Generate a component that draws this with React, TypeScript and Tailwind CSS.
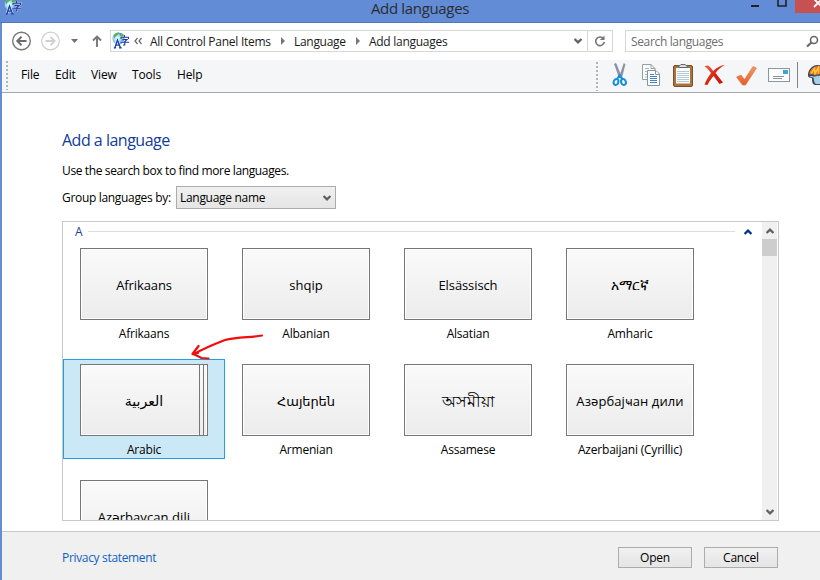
import { memo } from 'react'

interface Language {
  native: string
  name: string
  nativeClass: string
  selected?: boolean
}

const LANGUAGES: Language[] = [
  { native: 'Afrikaans', name: 'Afrikaans', nativeClass: 'text-[13px] tracking-[-0.1px]' },
  { native: 'shqip', name: 'Albanian', nativeClass: 'text-[13px] tracking-normal' },
  { native: 'Elsässisch', name: 'Alsatian', nativeClass: 'text-[13px] tracking-[-0.1px]' },
  { native: 'አማርኛ', name: 'Amharic', nativeClass: 'text-[14px]' },
  { native: 'العربية', name: 'Arabic', nativeClass: 'text-[14px]', selected: true },
  { native: 'Հայերեն', name: 'Armenian', nativeClass: 'text-[13px] tracking-[-0.1px]' },
  { native: 'অসমীয়া', name: 'Assamese', nativeClass: 'text-[15.5px]' },
  { native: 'Азәрбајҹан дили', name: 'Azerbaijani (Cyrillic)', nativeClass: 'text-[13px] tracking-[0.08px]' },
  { native: 'Azərbaycan dili', name: '', nativeClass: 'text-[13px] tracking-[0.08px]' },
]

const MENU = [
  { label: 'File', className: 'w-[34px]' },
  { label: 'Edit', className: 'w-9' },
  { label: 'View', className: 'w-[41px]' },
  { label: 'Tools', className: 'w-[45px]' },
  { label: 'Help', className: 'w-10' },
]

function LanguageIcon() {
  return (
    <svg width="18" height="17" viewBox="0 0 18 17" className="shrink-0">
      <defs>
        <radialGradient id="globe" cx="0.4" cy="0.5" r="0.65">
          <stop offset="0" stopColor="#f2fdff" />
          <stop offset="0.45" stopColor="#9fdcf4" />
          <stop offset="0.75" stopColor="#4a94dd" />
          <stop offset="1" stopColor="#1c49b8" />
        </radialGradient>
      </defs>
      <circle cx="6.5" cy="6.5" r="6" fill="url(#globe)" />
      <path d="M1.500 4C3 1 5 .6 7 1L5.500 3 3.500 4.500 2.500 6.500ZM8 2l2.500-.5 1.500 3-2 1.500-2-1.500Z" fill="#5fb04e" />
      <path d="M12.500 3v2M9 7V5.200h7.500V7M10.500 7.500h4.500L12.800 9.500V13h-1.800M8.500 10.200h8.700" stroke="#fff" strokeWidth="2.200" fill="none" opacity=".5" />
      <path d="M12.500 3v2M9 7V5.200h7.500V7M10.500 7.500h4.500L12.800 9.500V13h-1.800M8.500 10.200h8.700" stroke="#203d9c" strokeWidth="1.100" fill="none" />
      <path d="M2.800 16 5.500 8l3 8M4 13h3.500" stroke="#fff" strokeWidth="2.600" fill="none" opacity=".7" />
      <path d="M2.800 16 5.500 8l3 8M4 13.200h3.500M1.800 15.800h2.300M7 15.800h2.700" stroke="#173dae" strokeWidth="1.300" fill="none" />
    </svg>
  )
}

function Chevron({ up = false, color = '#606060' }: { up?: boolean; color?: string }) {
  return (
    <svg width="8" height="6" viewBox="0 0 8 6" className="shrink-0">
      <path d={up ? 'M.6 5 4 1.600 7.400 5' : 'M.6 1 4 4.400 7.400 1'} stroke={color} strokeWidth="2.200" fill="none" />
    </svg>
  )
}

function Separator() {
  return (
    <svg width="4" height="8" viewBox="0 0 4 8" className="shrink-0">
      <path d="M0 0v8l4-4Z" fill="#777" />
    </svg>
  )
}

function Gripper() {
  return (
    <svg width="2" height="30" viewBox="0 0 2 30" className="shrink-0">
      <path d="M1 1v29" stroke="#b4b4b6" strokeWidth="2" strokeDasharray="2 2" />
    </svg>
  )
}

const TitleBar = memo(function TitleBar() {
  return (
    <div className="relative flex h-[23px] items-start justify-center border-b border-[#4f78b8] bg-[#628cd5] pl-5">
      <div className="absolute top-[-2px] left-1">
        <LanguageIcon />
      </div>
      <h1 className="text-[15px] leading-[16px] tracking-[-0.33px] text-[#2a2c33]">Add languages</h1>
      <div className="absolute top-0 right-0 flex">
        <svg width="69" height="13" viewBox="0 0 69 13">
          <path d="M0 5h8v2H0Z" fill="#1f222a" />
          <path d="M27 0v6h8V0" stroke="#1f222a" strokeWidth="1.6" fill="none" />
          <path d="M44 0h25v13H44Z" fill="#c75050" />
          <path d="m63 -1 8 8M71 -1l-8 8" stroke="#fff" strokeWidth="1.8" />
        </svg>
      </div>
    </div>
  )
})

const AddressRow = memo(function AddressRow() {
  return (
    <div className="flex h-[37px] items-start bg-white pt-[7px] pl-2.5">
      <svg width="98" height="22" viewBox="0 0 98 22" className="shrink-0" fill="none">
        <circle cx="9.500" cy="11" r="8.800" stroke="#777" strokeWidth="1.400" />
        <path d="M14.500 11H5.500M9.500 6.800 5.300 11l4.200 4.200" stroke="#6d6d6d" strokeWidth="2" />
        <circle cx="38.500" cy="11" r="8.800" stroke="#cfcfcf" strokeWidth="1.200" />
        <path d="M33.500 11h9M38.500 6.800l4.200 4.200-4.200 4.200" stroke="#cfcfcf" strokeWidth="1.800" />
        <path d="M59 9h7l-3.500 4Z" fill="#707070" />
        <path d="M85 17V7M81 10.500l4-4 4 4" stroke="#777" strokeWidth="1.900" />
      </svg>
      <div className="flex h-[22px] w-[503px] items-center border border-[#d6d6d6] text-[#1a1a1a]">
        <div className="flex w-[23px] shrink-0 pb-0.5 pl-px">
          <LanguageIcon />
        </div>
        <span className="w-4 shrink-0">
          <svg width="8" height="8" viewBox="0 0 8 8">
            <path d="M3.500 1 1 4l2.500 3M7.500 1 5 4l2.500 3" stroke="#666" strokeWidth="1.200" fill="none" />
          </svg>
        </span>
        <span className="w-[131px] shrink-0 pt-0.5 tracking-[-0.26px]">All Control Panel Items</span>
        <Separator />
        <span className="w-[71px] shrink-0 pt-0.5 pl-[9px] tracking-[-0.3px]">Language</span>
        <Separator />
        <span className="flex-1 pt-0.5 pl-[9px] tracking-[-0.28px]">Add languages</span>
        <Chevron />
        <div className="ml-[5px] flex h-5 w-[25px] items-center justify-center border-l border-[#d6d6d6]">
          <svg width="12" height="12" viewBox="0 0 12 12" fill="none">
            <path d="M9.800 4.200A4.300 4.300 0 1 0 10.300 7" stroke="#777" strokeWidth="1.600" />
            <path d="M5.800 5h4.700V.5Z" fill="#777" />
          </svg>
        </div>
      </div>
      <div className="ml-3 flex h-[22px] w-[195px] shrink-0 items-center justify-between border-y border-l border-[#d6d6d6] pl-[5px] text-[#6d6d6d]">
        <span className="pt-0.5 tracking-[-0.35px]">Search languages</span>
        <svg width="13" height="13" viewBox="0 0 13 13" fill="none" className="mr-px">
          <circle cx="8" cy="5" r="3.500" stroke="#666" strokeWidth="1.600" />
          <path d="m5.500 7.500-4.500 4" stroke="#666" strokeWidth="2.200" />
        </svg>
      </div>
    </div>
  )
})

function ToolbarIcons() {
  return (
    <svg width="212" height="30" viewBox="608 61 212 30" className="shrink-0" fill="none">
      <defs>
        <linearGradient id="red" x1="0" y1="0" x2="1" y2="1">
          <stop offset="0" stopColor="#ef674e" />
          <stop offset="0.5" stopColor="#d62410" />
          <stop offset="1" stopColor="#b91608" />
        </linearGradient>
        <linearGradient id="orange" x1="0" y1="0" x2="0" y2="1">
          <stop offset="0" stopColor="#f79862" />
          <stop offset="1" stopColor="#e45d28" />
        </linearGradient>
      </defs>
      {/* cut */}
      <path d="m614.500 64 1.500-.5 5.500 14-2 .5ZM624 63.500l1 1-3.500 13.500-2-1Z" fill="#8b96a9" stroke="#64718a" strokeWidth=".5" />
      <ellipse cx="616" cy="82" rx="2.300" ry="3" transform="rotate(20 616 82)" stroke="#168fdd" strokeWidth="2" />
      <ellipse cx="623.500" cy="82" rx="2.300" ry="3" transform="rotate(-20 623.500 82)" stroke="#168fdd" strokeWidth="2" />
      <path d="m617 79 2.500-3.500 3 3.500" stroke="#168fdd" strokeWidth="2" />
      {/* copy */}
      <path d="M642.500 64.500h8.500l4 4v11h-12.500Z" fill="#fff" stroke="#979da5" />
      <path d="M651 64.500v4h4" stroke="#979da5" />
      <path d="M645 68.500h4M645 71.500h6M645 74.500h4M645 77h3" stroke="#9bbad2" />
      <path d="M647.500 70.500h8.500l3.500 3.500v11.500h-12Z" fill="#fff" stroke="#8c929a" />
      <path d="M655.500 70.500v4h4" stroke="#8c929a" />
      <path d="M650 74.500h4M650 76.500h7M650 78.500h7M650 80.500h7M650 82.500h7" stroke="#3f83c5" />
      {/* paste */}
      <rect x="673.500" y="65.500" width="19" height="21" rx="1.500" fill="#a9743b" stroke="#79502a" />
      <path d="M676 68h14v15.500h-14Z" fill="#fbfdff" />
      <path d="M677 71.500h12M677 73.500h12M677 75.500h12M677 77.500h12M677 79.500h12M677 81.500h12" stroke="#b5c8d6" />
      <path d="M678.500 67.500c0-2 2-2 2.500-3h4c.5 1 2.500 1 2.500 3Z" fill="#d8e0e5" stroke="#5d6872" />
      {/* delete */}
      <path d="M704.500 66.500c3-2 5-1 8.500 4.500 4-4 8-5.500 12-6-4 2-7 4.500-9.500 8 3 4 5.500 7 7.500 9.500l-3.500 1.500-6-8c-3 3.500-4.500 6-6 9l-3-.5c1.500-4 4-8 6.500-11.500-2.500-3.500-4.500-5.500-6.500-6.500Z" fill="url(#red)" />
      {/* confirm */}
      <path d="m736.500 77 4.500-2 3.500 4.500 8.500-13 3.500 1.500-11 17h-3Z" fill="url(#orange)" stroke="#d97447" strokeWidth=".6" />
      {/* mail */}
      <rect x="768.500" y="68.500" width="21" height="13" fill="#fbfcfd" stroke="#8c969d" />
      <path d="M783 70h5v4h-5Z" fill="#37a8d2" />
      <path d="M773 76.500h11M773 78.500h9" stroke="#8b9398" />
      <path d="M797.500 62v26" stroke="#7f8286" />
      {/* shell extension */}
      <path d="M808 75.500c0-6 4-10 9-10.500h3v20h-5c-3-1-3-4-3-7-3 0-4-1-4-2.500Z" fill="#3b4650" />
      <path d="M809.500 74.500c0-4.500 3.500-8 8-8.500h2.500v8.500c-2-1-3 .5-4.500.5s-3-1-6-.5Z" fill="#ee7728" />
      <path d="m811 73.500 3.500-5 .5 5 3.500-6v6" stroke="#ffc83e" strokeWidth="1.500" />
      <path d="M809 76.500c3-1.500 4 .5 6 0s3-1 5-.5v8h-4c-2-1-2-4-2.500-6.500Z" fill="#a9cfe8" />
    </svg>
  )
}

const MenuBar = memo(function MenuBar() {
  return (
    <div className="flex h-[33px] items-start justify-between border-b border-[#a8a8a8] bg-[#f5f6f8] pt-px pl-1">
      <div className="flex h-7 items-center">
        <Gripper />
        <div className="flex pl-[13px] tracking-[-0.15px]">
          {MENU.map((item) => (
            <span key={item.label} className={item.className}>
              {item.label}
            </span>
          ))}
        </div>
      </div>
      <div className="flex">
        <Gripper />
        <span className="w-2.5" />
        <ToolbarIcons />
      </div>
    </div>
  )
})

function LanguageTile({ language }: { language: Language }) {
  return (
    <div
      className={`flex h-[100px] w-[162px] flex-col items-center border pt-1 ${
        language.selected ? 'border-[#26a0da] bg-[#cbe8f6]' : 'border-transparent'
      }`}
    >
      <div className="relative flex h-[72px] w-32 shrink-0 border border-[#777] bg-white p-px">
        <div className="flex flex-1 items-center justify-center bg-linear-to-b from-[#fafafa] to-[#ececec] pt-0.5">
          <span className={`leading-[18px] whitespace-nowrap ${language.nativeClass}`}>{language.native}</span>
        </div>
        {/* edges of the cards stacked behind a language that has variants */}
        {language.selected && (
          <div className="absolute inset-y-0 right-[3px] w-[5px] border-x border-[#777] bg-linear-to-b from-[#fafafa] to-[#ececec]" />
        )}
      </div>
      <span className="mt-[5px] leading-[18px] tracking-[-0.2px] whitespace-nowrap">{language.name}</span>
    </div>
  )
}

function LanguageList() {
  return (
    <div className="relative mt-3 flex h-[300px] w-[717px] border border-[#c8c8c8]">
      <div className="flex-1 overflow-hidden">
        <div className="flex h-[21px] items-start pt-px pr-2.5 pl-3">
          <span className="w-[13px] leading-[18px] text-[#1e3f9e]">A</span>
          <span className="mt-2 h-px w-[648px] bg-[#d5dfe9]" />
          <span className="mt-1.5 ml-[9px] flex">
            <Chevron up color="#003399" />
          </span>
        </div>
        <div className="grid grid-cols-[repeat(4,162px)] gap-y-4">
          {LANGUAGES.map((language) => (
            <LanguageTile key={language.native} language={language} />
          ))}
        </div>
      </div>
      <div className="mr-px flex w-[15px] flex-col items-center bg-[#f0f0f0]">
        <div className="flex h-[17px] items-center">
          <Chevron up />
        </div>
        <div className="h-[17px] w-full bg-[#cdcdcd]" />
        <div className="mt-auto flex h-[17px] items-center">
          <Chevron />
        </div>
      </div>
      <svg width="76" height="28" viewBox="0 0 76 28" className="absolute top-[111px] left-[125px]" fill="none">
        <path
          d="M74 2.500c-11 2-24 1.500-37 4.500C24 12 15 16 6 21M10.500 13l-6 8 3 1 6 3 7 .5M5 21l5-1"
          stroke="#f20d0d"
          strokeWidth="2.200"
          strokeLinecap="round"
          strokeLinejoin="round"
        />
      </svg>
    </div>
  )
}

function Button({ label }: { label: string }) {
  return (
    <button className="h-[21px] w-[74px] border border-[#acacac] bg-linear-to-b from-[#f0f0f0] to-[#e5e5e5] leading-[18px] tracking-[-0.2px]">
      {label}
    </button>
  )
}

export default function App() {
  return (
    <div className="flex h-[580px] w-[820px] flex-col overflow-hidden bg-white font-['Open_Sans','Noto_Sans','DejaVu_Sans',sans-serif] text-[12px] leading-4 text-black">
      <TitleBar />
      <div className="flex flex-1 flex-col border-l-2 border-[#628cd5]">
        <AddressRow />
        <MenuBar />
        <main className="flex-1 pt-[35px] pl-[60px]">
          <h2 className="text-[16px] leading-6 tracking-[-0.5px] text-[#103b9d]">Add a language</h2>
          <p className="mt-[11px] leading-4 tracking-[-0.37px]">Use the search box to find more languages.</p>
          <div className="mt-[7px] flex h-[23px] items-center">
            <span className="w-[114px] tracking-[-0.32px]">Group languages by:</span>
            <div className="flex h-[23px] w-40 items-center justify-between border border-[#acacac] bg-linear-to-b from-[#f0f0f0] to-[#e5e5e5] pr-1 pl-[3px]">
              <span className="tracking-[-0.3px]">Language name</span>
              <Chevron />
            </div>
          </div>
          <LanguageList />
        </main>
        <footer className="flex h-[49px] items-start border-t border-[#c8c8c8] bg-[#f0f0f0] pt-[15px] pr-[42px] pl-[60px]">
          <a className="mt-[3px] flex-1 tracking-[-0.33px] text-[#0f62c5]">Privacy statement</a>
          <div className="flex gap-3">
            <Button label="Open" />
            <Button label="Cancel" />
          </div>
        </footer>
      </div>
    </div>
  )
}
